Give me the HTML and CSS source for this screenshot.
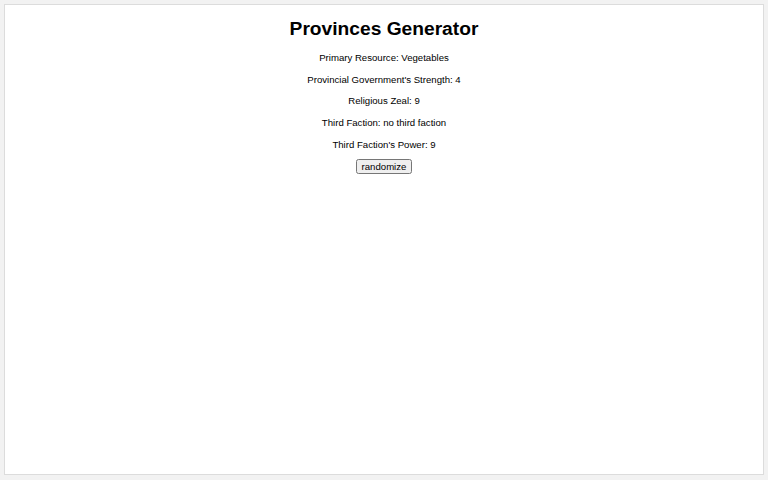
FILE: index.html
```html
<!DOCTYPE html>
<html lang="en">
<head>
    <meta charset="UTF-8">
    <meta name="viewport" content="width=device-width, initial-scale=1.0">
    <title>Provinces Generator</title>
    <link rel="stylesheet" href="styles.css">
</head>
<body>
    <div id="page">
        <h1>Provinces Generator</h1>
        <p>Primary Resource: <span id="resource">Vegetables</span></p>
        <p>Provincial Government's Strength: <span id="strength">4</span></p>
        <p>Religious Zeal: <span id="zeal">9</span></p>
        <p>Third Faction: <span id="faction">no third faction</span></p>
        <p>Third Faction's Power: <span id="power">9</span></p>
        <button id="randomize">randomize</button>
    </div>
</body>
</html>
```

FILE: styles.css
```css
body {
    margin: 0;
    padding: 4px 4px 5px;
    height: 480px;
    box-sizing: border-box;
    background-color: #f2f2f2;
    font-family: "Liberation Sans", Arial, sans-serif;
}
#page {
    height: 100%;
    box-sizing: border-box;
    background-color: #fff;
    border: 1px solid #dcdcdc;
    text-align: center;
    padding-top: 13px;
    font-size: 9.6px;
}
h1 {
    font-size: 19.2px;
    line-height: 22px;
    margin: 0 0 12px;
}
p {
    font-size: 9.6px;
    line-height: 12px;
    margin: 9.7px 0;
}
p:last-of-type {
    margin-bottom: 8px;
}
button {
    font-family: "Liberation Sans", Arial, sans-serif;
    font-size: 9.6px;
    padding: 0 4px;
}
```
